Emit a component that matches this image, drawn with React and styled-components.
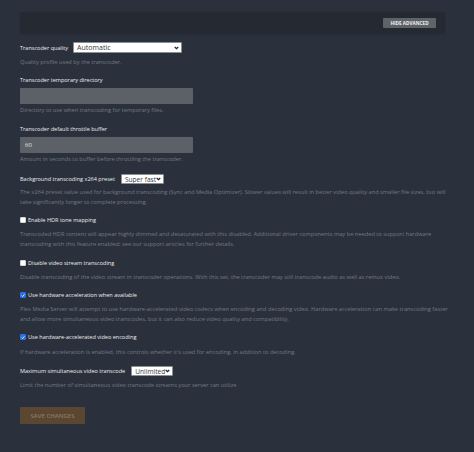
import React from 'react'
import styled, { createGlobalStyle } from 'styled-components'

const sans = `'Open Sans', 'Noto Sans', sans-serif`

const GlobalStyle = createGlobalStyle`
  html, body {
    margin: 0;
    padding: 0;
    background: #2b313c;
  }
  body {
    font-family: ${sans};
    -webkit-font-smoothing: antialiased;
  }
`

const Page = styled.div`
  width: 474px;
  height: 452px;
  box-sizing: border-box;
  padding: 12px 29px 0 20px;
  background: #2b313c;
  overflow: hidden;
`

const Toolbar = styled.div`
  height: 21px;
  display: flex;
  justify-content: flex-end;
  align-items: center;
  padding-right: 9px;
  background: #242932;
  box-shadow: 0 1px 2px rgba(0, 0, 0, 0.15);
`

const ToolbarButton = styled.button`
  height: 10px;
  width: 53px;
  padding: 0;
  border: 0;
  border-radius: 1px;
  background: #5e6269;
  color: #f0f0f0;
  font-family: ${sans};
  font-size: 4.6px;
  font-weight: 700;
  text-transform: uppercase;
  letter-spacing: 0.05px;
  line-height: 10px;
`

const Form = styled.div`
  padding-top: 9px;
`

const Group = styled.div`
  margin-bottom: ${(p) => p.$gap || 9}px;
`

const Row = styled.div`
  display: flex;
  align-items: center;
  height: ${(p) => p.$h || 11}px;
`

const Label = styled.div`
  font-size: 5.55px;
  line-height: 8px;
  color: #eceef0;
  margin-bottom: ${(p) => p.$mb || 0}px;
  white-space: nowrap;
`

const InlineLabel = styled(Label)`
  margin-right: ${(p) => p.$mr || 5}px;
`

const Help = styled.div`
  margin-top: ${(p) => p.$mt || 4}px;
  margin-right: -8px;
  font-size: 5.7px;
  line-height: 10px;
  color: #737983;
`

const SelectBox = styled.div`
  box-sizing: border-box;
  width: ${(p) => p.$w}px;
  height: ${(p) => p.$h || 11}px;
  display: flex;
  align-items: center;
  justify-content: space-between;
  padding: 0 2px 0 3px;
  background: #ffffff;
  border: 1px solid #8a8f96;
  border-radius: 1px;
  color: #3a3a3a;
  font-family: ${sans};
  font-size: ${(p) => p.$fs || 7}px;
  white-space: nowrap;
  overflow: hidden;

  svg {
    flex-shrink: 0;
  }
`

const Chevron = () => (
  <svg width="5" height="4" viewBox="0 0 10 8">
    <path d="M1.5 2 L5 5.5 L8.5 2" fill="none" stroke="#222" strokeWidth="2.4" />
  </svg>
)

const TextInput = styled.div`
  box-sizing: border-box;
  width: 173px;
  height: 16px;
  margin-top: 4px;
  padding-left: 5px;
  display: flex;
  align-items: center;
  background: #5c6168;
  border-radius: 1px;
  color: #e4e4e4;
  font-size: 6px;
`

const Box = styled.span`
  box-sizing: border-box;
  width: 6px;
  height: 6px;
  margin-right: 2px;
  border-radius: 1px;
  display: inline-flex;
  align-items: center;
  justify-content: center;
  background: ${(p) => (p.$checked ? '#2a72e0' : '#ffffff')};
  border: 1px solid ${(p) => (p.$checked ? '#2a72e0' : '#d5d5d5')};
`

const Check = ({ checked, children }) => (
  <Row $h={8}>
    <Box $checked={checked}>
      {checked && (
        <svg width="5" height="5" viewBox="0 0 10 10">
          <path d="M1.5 5.2 L4 7.6 L8.6 2.2" fill="none" stroke="#fff" strokeWidth="2" />
        </svg>
      )}
    </Box>
    <Label>{children}</Label>
  </Row>
)

const SaveButton = styled.button`
  margin-top: 8px;
  width: 65px;
  height: 17px;
  padding: 0;
  border: 0;
  border-radius: 1px;
  background: #5a4631;
  color: #8d7b67;
  font-family: ${sans};
  font-size: 6px;
  font-weight: 600;
  text-transform: uppercase;
`

const App = () => (
  <>
    <GlobalStyle />
    <Page>
      <Toolbar>
        <ToolbarButton>Hide Advanced</ToolbarButton>
      </Toolbar>
      <Form>
        <Group>
          <Row>
            <InlineLabel>Transcoder quality</InlineLabel>
            <SelectBox $w={109}>
              Automatic
              <Chevron />
            </SelectBox>
          </Row>
          <Help>Quality profile used by the transcoder.</Help>
        </Group>

        <Group $gap={10}>
          <Label>Transcoder temporary directory</Label>
          <TextInput />
          <Help $mt={1}>Directory to use when transcoding for temporary files.</Help>
        </Group>

        <Group $gap={10}>
          <Label>Transcoder default throttle buffer</Label>
          <TextInput>60</TextInput>
          <Help $mt={1}>Amount in seconds to buffer before throttling the transcoder.</Help>
        </Group>

        <Group>
          <Row $h={10}>
            <InlineLabel $mr={6}>Background transcoding x264 preset</InlineLabel>
            <SelectBox $w={43} $h={10} $fs={6.6}>
              Super fast
              <Chevron />
            </SelectBox>
          </Row>
          <Help $mt={3}>
            The x264 preset value used for background transcoding (Sync and Media Optimizer). Slower
            values will result in better video quality and smaller file sizes, but will take
            significantly longer to complete processing.
          </Help>
        </Group>

        <Group $gap={10}>
          <Check>Enable HDR tone mapping</Check>
          <Help $mt={5}>
            Transcoded HDR content will appear highly dimmed and desaturated with this disabled.
            Additional driver components may be needed to support hardware transcoding with this
            feature enabled; see our support articles for further details.
          </Help>
        </Group>

        <Group>
          <Check>Disable video stream transcoding</Check>
          <Help $mt={5}>
            Disable transcoding of the video stream in transcoder operations. With this set, the
            transcoder may still transcode audio as well as remux video.
          </Help>
        </Group>

        <Group>
          <Check checked>Use hardware acceleration when available</Check>
          <Help $mt={5}>
            Plex Media Server will attempt to use hardware-accelerated video codecs when encoding and
            decoding video. Hardware acceleration can make transcoding faster and allow more
            simultaneous video transcodes, but it can also reduce video quality and compatibility.
          </Help>
        </Group>

        <Group>
          <Check checked>Use hardware-accelerated video encoding</Check>
          <Help $mt={6}>
            If hardware acceleration is enabled, this controls whether it's used for encoding, in
            addition to decoding.
          </Help>
        </Group>

        <Group>
          <Row $h={10}>
            <InlineLabel $mr={6}>Maximum simultaneous video transcode</InlineLabel>
            <SelectBox $w={42} $h={10} $fs={6.6}>
              Unlimited
              <Chevron />
            </SelectBox>
          </Row>
          <Help $mt={4}>
            Limit the number of simultaneous video transcode streams your server can utilize
          </Help>
        </Group>

        <SaveButton>Save Changes</SaveButton>
      </Form>
    </Page>
  </>
)

export default App
